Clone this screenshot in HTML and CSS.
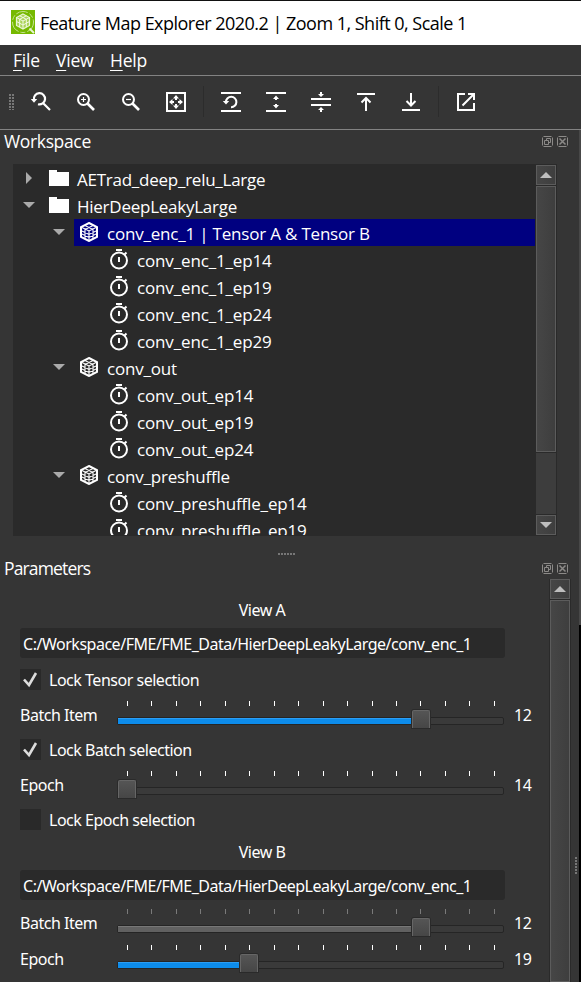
FILE: index.html
```html
<!DOCTYPE html>
<html>
  <head>
    <meta charset="utf-8">
    <title>Feature Map Explorer</title>
    <link rel="stylesheet" href="styles.css">
  </head>
  <body>
    <!-- shared icons -->
    <svg width="0" height="0" class="defs">
      <symbol id="folder" viewBox="0 0 20 16"><path d="M0 0H8V2H20V16H0Z" fill="#fff"/></symbol>
      <symbol id="cube" viewBox="0 0 20 20">
        <path d="M10 1L18 5V15L10 19L2 15V5Z" fill="none" stroke="#fff" stroke-width="2"/>
        <path d="M3 5.5L10 9L17 5.5M10 9V18M6 3.5L14 7.5V16.5M14 3.5L6 7.5V16.5M3 9L10 12.5L17 9M3 12L10 15.5L17 12" fill="none" stroke="#fff" stroke-width="1.1"/>
      </symbol>
      <symbol id="watch" viewBox="0 0 20 22">
        <circle cx="10" cy="12.500" r="8" fill="none" stroke="#fff" stroke-width="2"/>
        <path d="M7 2H13M10 9V14M15.500 6.500L17.500 4.500" fill="none" stroke="#fff" stroke-width="2"/>
      </symbol>
      <symbol id="right" viewBox="0 0 12 12"><path d="M3 0L9 6L3 12Z" fill="#aaa"/></symbol>
      <symbol id="down" viewBox="0 0 12 12"><path d="M0 3H12L6 9Z" fill="#aaa"/></symbol>
      <symbol id="sbup" viewBox="0 0 12 6"><path d="M0 6L6 0L12 6Z" fill="#bebebe"/></symbol>
      <symbol id="sbdown" viewBox="0 0 12 6"><path d="M0 0L6 6L12 0Z" fill="#bebebe"/></symbol>
      <symbol id="float" viewBox="0 0 11 11"><path d="M1.500 .5H9.500M1.500 10.500H9.500M.5 1.500V9.500M10.500 1.500V9.500M2.500 4.500H6.500V8.500H2.500ZM4.500 4V2.500H8.500V6.500H7" fill="none" stroke="#8c8a88"/></symbol>
      <symbol id="close" viewBox="0 0 11 11"><path d="M1.500 .5H9.500M1.500 10.500H9.500M.5 1.500V9.500M10.500 1.500V9.500" fill="none" stroke="#8c8a88"/><path d="M2.500 2.500L8.500 8.500M8.500 2.500L2.500 8.500" stroke="#8c8a88" stroke-width="1.500"/></symbol>
      <symbol id="check" viewBox="0 0 21 21"><path d="M4 10.500L9 16L16 4" fill="none" stroke="#dcdcdc" stroke-width="2.600"/></symbol>
    </svg>

    <div class="titlebar">
      <svg class="logo" width="24" height="24" viewBox="0 0 24 24">
        <path d="M0 0H24V24H0Z" fill="#76b900"/>
        <circle cx="12" cy="12" r="10.500" fill="none" stroke="#c5e391" stroke-width="1" stroke-dasharray="12 2 5 2"/>
        <path d="M12 4L18.500 7.500V15.500L12 19L5.500 15.500V7.500Z" fill="#a9d355" stroke="#e9f5d3" stroke-width="1.200"/>
        <path d="M5.500 7.500L12 11L18.500 7.500M12 11V19M8.700 5.800L15.300 9.300V17M15.300 5.800L8.700 9.300V17M5.500 11.500L12 15L18.500 11.500" fill="none" stroke="#f3fae6" stroke-width="1"/>
        <path d="M18.500 18.500L23 23" stroke="#e9f5d3" stroke-width="2"/>
      </svg>
      <span class="caption">Feature Map Explorer 2020.2 | Zoom 1, Shift 0, Scale 1</span>
    </div>

    <div class="menubar">
      <span class="m1"><u>F</u>ile</span>
      <span class="m2"><u>V</u>iew</span>
      <span class="m3"><u>H</u>elp</span>
    </div>

    <div class="toolbar">
      <div class="grip"></div>
      <div class="tools">
        <svg width="22" height="22" viewBox="0 0 22 22"><path d="M4 9A5.600 5.600 0 1 1 8 13.200M13 12L20 19" fill="none" stroke="#fff" stroke-width="2.200"/><path d="M.8 8H7.200L4 11.800Z" fill="#fff"/></svg>
        <svg width="22" height="22" viewBox="0 0 22 22"><circle cx="8.500" cy="8.500" r="5.500" fill="none" stroke="#fff" stroke-width="2"/><path d="M12.500 12.500L19 19" stroke="#fff" stroke-width="2.600"/><path d="M6 8.500H11M8.500 6V11" stroke="#fff" stroke-width="1.200"/></svg>
        <svg width="22" height="22" viewBox="0 0 22 22"><circle cx="8.500" cy="8.500" r="5.500" fill="none" stroke="#fff" stroke-width="2"/><path d="M12.500 12.500L19 19" stroke="#fff" stroke-width="2.600"/><path d="M6 8.500H11" stroke="#fff" stroke-width="1.200"/></svg>
        <svg width="22" height="22" viewBox="0 0 22 22"><path d="M2 2H20V20H2Z" fill="none" stroke="#fff" stroke-width="2"/><path d="M11 4L14 7.500H8ZM11 18L14 14.500H8ZM4 11L7.500 8V14ZM18 11L14.500 8V14Z" fill="#fff"/><path d="M11 7V9M11 13V15M7 11H9M13 11H15" stroke="#fff" stroke-width="2"/></svg>
      </div>
      <div class="sep"></div>
      <div class="tools second">
        <svg width="22" height="22" viewBox="0 0 22 22"><path d="M1 2H21M1 20H21" stroke="#fff" stroke-width="2"/><path d="M6 11A5.200 5.200 0 1 1 11 16.200" fill="none" stroke="#fff" stroke-width="2"/><path d="M2.800 10H9.200L6 13.600Z" fill="#fff"/></svg>
        <svg width="22" height="22" viewBox="0 0 22 22"><path d="M1 2H21M1 20H21M11 6V9M11 13V16" stroke="#fff" stroke-width="2"/><path d="M8 8L11 4.500L14 8ZM8 14L11 17.500L14 14Z" fill="#fff"/></svg>
        <svg width="22" height="22" viewBox="0 0 22 22"><path d="M1 8H21M1 14H21M11 1V4M11 18V21" stroke="#fff" stroke-width="2"/><path d="M8 3L11 6L14 3ZM8 19L11 16L14 19Z" fill="#fff"/></svg>
        <svg width="22" height="22" viewBox="0 0 22 22"><path d="M2 3H20M11 20V8M6.500 11.500L11 7L15.500 11.500" fill="none" stroke="#fff" stroke-width="2"/></svg>
        <svg width="22" height="22" viewBox="0 0 22 22"><path d="M2 19H20M11 2V14M6.500 10L11 14.500L15.500 10" fill="none" stroke="#fff" stroke-width="2"/></svg>
      </div>
      <div class="sep"></div>
      <svg width="22" height="22" viewBox="0 0 22 22"><path d="M10 3H3V19H19V12M7.500 14.500L18 4M13 3H19V9" fill="none" stroke="#fff" stroke-width="2"/></svg>
    </div>

    <div class="main">
      <div class="docks">
        <div class="docktitle">
          <span>Workspace</span>
          <svg width="11" height="11"><use href="#float"/></svg>
          <svg width="11" height="11"><use href="#close"/></svg>
        </div>

        <div class="tree">
          <div class="items">
            <div class="item l0"><svg class="arrow" width="12" height="12"><use href="#right"/></svg><svg class="folder" width="20" height="16"><use href="#folder"/></svg><span>AETrad_deep_relu_Large</span></div>
            <div class="item l0"><svg class="arrow" width="12" height="12"><use href="#down"/></svg><svg class="folder" width="20" height="16"><use href="#folder"/></svg><span>HierDeepLeakyLarge</span></div>
            <div class="item l1 selected"><svg class="arrow" width="12" height="12"><use href="#down"/></svg><div class="hl"><svg width="20" height="20"><use href="#cube"/></svg><span>conv_enc_1 | Tensor A &amp; Tensor B</span></div></div>
            <div class="item l2"><svg width="20" height="22"><use href="#watch"/></svg><span>conv_enc_1_ep14</span></div>
            <div class="item l2"><svg width="20" height="22"><use href="#watch"/></svg><span>conv_enc_1_ep19</span></div>
            <div class="item l2"><svg width="20" height="22"><use href="#watch"/></svg><span>conv_enc_1_ep24</span></div>
            <div class="item l2"><svg width="20" height="22"><use href="#watch"/></svg><span>conv_enc_1_ep29</span></div>
            <div class="item l1"><svg class="arrow" width="12" height="12"><use href="#down"/></svg><div class="hl"><svg width="20" height="20"><use href="#cube"/></svg><span>conv_out</span></div></div>
            <div class="item l2"><svg width="20" height="22"><use href="#watch"/></svg><span>conv_out_ep14</span></div>
            <div class="item l2"><svg width="20" height="22"><use href="#watch"/></svg><span>conv_out_ep19</span></div>
            <div class="item l2"><svg width="20" height="22"><use href="#watch"/></svg><span>conv_out_ep24</span></div>
            <div class="item l1"><svg class="arrow" width="12" height="12"><use href="#down"/></svg><div class="hl"><svg width="20" height="20"><use href="#cube"/></svg><span>conv_preshuffle</span></div></div>
            <div class="item l2"><svg width="20" height="22"><use href="#watch"/></svg><span>conv_preshuffle_ep14</span></div>
            <div class="item l2"><svg width="20" height="22"><use href="#watch"/></svg><span>conv_preshuffle_ep19</span></div>
          </div>
          <div class="scrollbar">
            <div class="sbbtn"><svg width="12" height="6"><use href="#sbup"/></svg></div>
            <div class="thumb treethumb"></div>
            <div class="groove"></div>
            <div class="sbbtn"><svg width="12" height="6"><use href="#sbdown"/></svg></div>
          </div>
        </div>

        <div class="splitter"></div>

        <div class="docktitle params-title">
          <span>Parameters</span>
          <svg width="11" height="11"><use href="#float"/></svg>
          <svg width="11" height="11"><use href="#close"/></svg>
        </div>

        <div class="params">
          <div class="form">
            <div class="view">View A</div>
            <div class="path">C:/Workspace/FME/FME_Data/HierDeepLeakyLarge/conv_enc_1</div>
            <div class="lock"><div class="box"><svg width="21" height="21"><use href="#check"/></svg></div><span>Lock Tensor selection</span></div>
            <div class="row"><label>Batch Item</label><div class="slider" data-value="12"></div><span class="num">12</span></div>
            <div class="lock"><div class="box"><svg width="21" height="21"><use href="#check"/></svg></div><span>Lock Batch selection</span></div>
            <div class="row"><label>Epoch</label><div class="slider" data-value="0"></div><span class="num">14</span></div>
            <div class="lock"><div class="box"></div><span>Lock Epoch selection</span></div>
            <div class="view viewb">View B</div>
            <div class="path pathb">C:/Workspace/FME/FME_Data/HierDeepLeakyLarge/conv_enc_1</div>
            <div class="row"><label>Batch Item</label><div class="slider disabled" data-value="12"></div><span class="num">12</span></div>
            <div class="row"><label>Epoch</label><div class="slider" data-value="5"></div><span class="num">19</span></div>
          </div>
          <div class="scrollbar">
            <div class="sbbtn"><svg width="12" height="6"><use href="#sbup"/></svg></div>
            <div class="thumb"></div>
          </div>
        </div>
      </div>
      <div class="edge"><div class="edgegrip"></div></div>
      <div class="outside"></div>
    </div>

    <script>
      // sliders go from 0 to 15, one tick for each step
      var sliders = document.querySelectorAll('.slider');
      for (var i = 0; i < sliders.length; i++) {
        var pos = Math.round(sliders[i].getAttribute('data-value') / 15 * 367);
        var ticks = '';
        for (var t = 0; t < 16; t++) ticks += '<i></i>';
        sliders[i].innerHTML = '<div class="ticks">' + ticks + '</div>' +
          '<div class="track"><div class="fill" style="width:' + pos + 'px"></div></div>' +
          '<div class="handle" style="left:' + pos + 'px"></div>';
      }
    </script>
  </body>
</html>
```
FILE: styles.css
```css
*{
	box-sizing:border-box;
}
body{
	margin:0;
	width:581px;
	height:982px;
	overflow:hidden;
	background:#353535;
	color:#fff;
	font-family:"Open Sans", "Noto Sans", sans-serif;
	font-size:17px;
	display:flex;
	flex-direction:column;
}
svg{
	display:block;
	flex:none;
}
span, label, .path, .view{
	white-space:nowrap;
}
.defs{
	position:absolute;
}

/* window caption and menu */
.titlebar{
	height:45px;
	flex:none;
	background:#fff;
	color:#000;
	border-top:1px solid #111;
	display:flex;
	align-items:center;
	padding:0 0 2px 11px;
}
.caption{
	margin-left:5px;
	font-size:18px;
	padding-top:2px;
	letter-spacing:-0.52px;
}
.menubar{
	height:31px;
	flex:none;
	display:flex;
	align-items:center;
	padding-left:13px;
	border-bottom:1px solid #838383;
	font-size:17.5px;
	letter-spacing:-0.2px;
}
.menubar u{
	text-underline-offset:3px;
	text-decoration-thickness:1px;
}
.m1{ width:43px; }
.m2{ width:54px; }

/* toolbar */
.toolbar{
	height:54px;
	flex:none;
	display:flex;
	align-items:center;
	padding:0 0 2px 9px;
	border-bottom:1px solid #838383;
}
.grip{
	width:6px;
	height:17px;
	background-image:linear-gradient(#353535 1px, transparent 1px), linear-gradient(90deg, #777 2px, transparent 2px);
	background-size:3px 3px;
}
.tools{
	display:flex;
	gap:23px;
	margin-left:15px;
}
.sep{
	width:1px;
	height:31px;
	background:#2c2c2c;
	margin:0 16px;
}
.second{
	margin-left:0;
}

.main{
	flex:1;
	display:flex;
	min-height:0;
}
.docks{
	width:572px;
	display:flex;
	flex-direction:column;
}
.docktitle{
	height:34px;
	flex:none;
	display:flex;
	align-items:center;
	padding:0 4px 13px 4px;
	gap:4px;
	font-size:17.5px;
}
.docktitle span{
	flex:1;
	letter-spacing:-0.35px;
}
.docktitle svg{
	margin-top:1px;
}

/* workspace tree */
.tree{
	height:372px;
	flex:none;
	margin:0 15px 0 13px;
	background:#2a2a2a;
	display:flex;
	padding:1px 0;
}
.items{
	width:522px;
	overflow:hidden;
}
.item{
	height:27px;
	display:flex;
	align-items:center;
	padding-left:10px;
}
.arrow{
	margin-bottom:1px;
}
.item span{
	padding-top:1px;
	letter-spacing:-0.2px;
}
.folder{
	margin:0 8px 2px 14px;
}
.l0 span{
	letter-spacing:-0.25px;
}
.l1{
	padding-left:40px;
}
.hl{
	flex:1;
	height:27px;
	display:flex;
	align-items:center;
	margin-left:9px;
	padding-left:5px;
}
.hl svg{
	margin-right:8px;
	margin-bottom:2px;
}
.selected .hl{
	background:#000080;
}
.l2{
	padding-left:96px;
}
.l2 svg{
	margin-right:8px;
	margin-bottom:2px;
}
.l2 span{
	letter-spacing:-0.15px;
}

.scrollbar{
	width:22px;
	flex:none;
	display:flex;
	flex-direction:column;
	gap:1px;
	background:#2a2a2a;
	padding:0 1px;
}
.sbbtn, .thumb{
	border:1px solid #5c5c5c;
	background:linear-gradient(90deg, #464646, #3e3e3e);
}
.sbbtn{
	height:20px;
	flex:none;
	display:flex;
	align-items:center;
	justify-content:center;
}
.thumb{
	flex:1;
}
.treethumb{
	flex:none;
	height:266px;
}
.groove{
	flex:1;
	background:#3d3d3d;
}

.splitter{
	width:18px;
	height:2px;
	flex:none;
	margin:17px auto 0 278px;
	background:repeating-linear-gradient(90deg, #777 0 2px, transparent 2px 3px);
}

/* parameters */
.params-title{
	height:24px;
	padding:2px 4px 0 4px;
}
.params-title span{
	letter-spacing:-0.85px;
}
.params{
	flex:1;
	min-height:0;
	display:flex;
	justify-content:space-between;
	font-family:"Noto Sans", "Open Sans", sans-serif;
	font-size:16px;
}
.params .scrollbar{
	margin-right:1px;
}
.form{
	width:520px;
	padding:17px 0 0 20px;
	margin-right:-30px;
	letter-spacing:-0.48px;
}
.view{
	width:484px;
	height:28px;
	line-height:28px;
	text-align:center;
}
.path{
	width:485px;
	height:30px;
	line-height:32px;
	margin:4px 0 11px;
	padding-left:3px;
	background:#2a2a2a;
	border-radius:3px;
}
.viewb{
	margin-top:8px;
}
.pathb{
	margin-bottom:6px;
}
.lock{
	height:21px;
	display:flex;
	align-items:center;
	margin-top:5px;
	margin-bottom:8px;
}
.box{
	width:21px;
	height:21px;
	background:#292929;
	margin-right:8px;
}
.row{
	width:520px;
	height:36px;
	display:flex;
	line-height:34px;
}
.row label{
	width:97px;
}
.num{
	margin-left:10px;
	letter-spacing:-0.3px;
}
.slider{
	width:387px;
	height:36px;
	padding-top:3px;
	position:relative;
}
.ticks{
	display:flex;
	justify-content:space-between;
	padding:0 9px 0 10px;
	margin-bottom:11px;
}
.ticks i{
	width:1px;
	height:5px;
	background:#fff;
}
.track{
	height:8px;
	border:1px solid #252525;
	border-radius:2px;
	background:#3a3a3a;
}
.fill{
	height:6px;
	background:#0d8ceb;
	border-top:1px solid #2b9ef5;
}
.disabled .ticks i{
	background:#7a7a7a;
}
.disabled .fill{
	background:#616161;
	border-top-color:#777;
}
.handle{
	position:absolute;
	top:12px;
	margin-left:1px;
	width:18px;
	height:18px;
	border:1px solid #666;
	border-bottom:none;
	border-radius:2px 2px 0 0;
	background:linear-gradient(#555, #464646);
	box-shadow:0 0 0 1px #2a2a2a;
}

/* right window edge */
.edge{
	width:7px;
	padding:727px 0 0 3px;
}
.edgegrip{
	width:2px;
	height:18px;
	background:repeating-linear-gradient(#777 0 2px, transparent 2px 3px);
}
.outside{
	width:2px;
	background:linear-gradient(#484848 495px, #000 495px);
}
```
